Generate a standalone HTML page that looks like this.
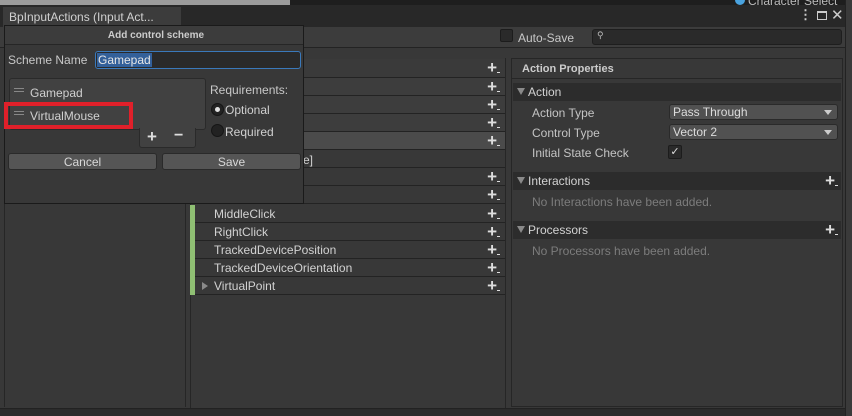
<!DOCTYPE html>
<html><head><style>
*{margin:0;padding:0;box-sizing:border-box}
body{width:852px;height:416px;overflow:hidden;background:#383838;font-family:"Liberation Sans",sans-serif;font-size:12px;color:#c4c4c4;position:relative}
.a{position:absolute}
.t{position:absolute;white-space:nowrap}
.row{position:absolute;left:190px;width:315px;height:18px;border-bottom:1px solid #232323}
.plus{position:absolute;right:8px;top:0;font-size:17px;font-weight:bold;color:#ddd;line-height:17px}
.plus:after{content:"";position:absolute;right:-3px;top:13px;width:3px;height:1px;background:#ddd}
.nm{position:absolute;left:24px;top:2px;font-size:12px;color:#d2d2d2}
.gb{position:absolute;left:0;top:0;width:5px;height:18px;background:#8fbf73}
.fold{position:absolute;left:513px;width:328px;height:18px;background:#2c2c2c}
.tri{position:absolute;left:4px;top:5px;width:0;height:0;border-left:4px solid transparent;border-right:4px solid transparent;border-top:7px solid #8a8a8a}
</style></head><body>
<div class="a" style="left:0;top:0;width:852px;height:8px;background:#1e1e1e"></div>
<div class="a" style="left:0;top:0;width:290px;height:5px;background:#9c9c9c"></div>
<div class="a" style="left:735px;top:0;width:10px;height:5px;border-radius:0 0 5px 5px;background:#4aa3df"></div>
<div class="t" style="left:748px;top:-6px;color:#bbb">Character Select</div>
<div class="a" style="left:0;top:5px;width:845px;height:22px;background:#282828"></div>
<div class="a" style="left:3px;top:7px;width:178px;height:20px;background:#3c3c3c"></div>
<div class="t" style="left:9px;top:10px;color:#d0d0d0">BpInputActions (Input Act...</div>
<div class="t" style="left:799px;top:7px;font-size:13px;color:#ccc;font-weight:bold">⋮</div>
<div class="a" style="left:817px;top:11px;width:10px;height:9px;border:1px solid #ccc;border-top:2px solid #ccc"></div>
<div class="t" style="left:831px;top:6px;font-size:15px;color:#ccc">✕</div>
<div class="a" style="left:845px;top:0;width:7px;height:416px;background:#3a3a3a;border-left:1px solid #222"></div>
<div class="a" style="left:0;top:27px;width:845px;height:21px;background:#3c3c3c;border-bottom:1px solid #232323"></div>
<div class="a" style="left:500px;top:29px;width:13px;height:13px;background:#2a2a2a;border:1px solid #1c1c1c;border-radius:2px"></div>
<div class="t" style="left:518px;top:31px;color:#c8c8c8">Auto-Save</div>
<div class="a" style="left:592px;top:29px;width:250px;height:16px;background:#2a2a2a;border:1px solid #1e1e1e;border-radius:3px"></div>
<div class="t" style="left:597px;top:30px;font-size:9px;color:#bbb">⚲</div>
<div class="a" style="left:4px;top:49px;width:182px;height:358px;border-left:1px solid #262626;border-right:1px solid #262626"></div>
<div class="a" style="left:190px;top:58px;width:316px;height:350px;border-left:1px solid #262626;border-right:1px solid #262626"></div>
<div class="a" style="left:511px;top:58px;width:332px;height:349px;border:1px solid #262626;background:#383838"></div>
<div class="a" style="left:0;top:408px;width:845px;height:8px;background:#2b2b2b;border-top:1px solid #222"></div>
<div class="row" style="top:59px;height:19px;background:#3a3a3a"><span class="plus" style="">+</span></div>
<div class="row" style="top:78px;background:#3d3d3d"><span class="plus">+</span></div>
<div class="row" style="top:96px;background:#3d3d3d"><span class="plus">+</span></div>
<div class="row" style="top:114px;background:#3d3d3d"><span class="plus">+</span></div>
<div class="row" style="top:132px;background:#4b4b4b"><span class="plus">+</span></div>
<div class="row" style="top:150px;background:#383838"><span class="nm" style="left:113px;top:3px">e]</span></div>
<div class="row" style="top:168px"><span class="gb"></span><span class="plus">+</span></div>
<div class="row" style="top:186px"><span class="gb"></span><span class="plus">+</span></div>
<div class="row" style="top:205px"><span class="gb"></span><span class="nm">MiddleClick</span><span class="plus">+</span></div>
<div class="row" style="top:223px"><span class="gb"></span><span class="nm">RightClick</span><span class="plus">+</span></div>
<div class="row" style="top:241px"><span class="gb"></span><span class="nm">TrackedDevicePosition</span><span class="plus">+</span></div>
<div class="row" style="top:259px"><span class="gb"></span><span class="nm">TrackedDeviceOrientation</span><span class="plus">+</span></div>
<div class="row" style="top:277px"><span class="gb"></span><span class="a" style="left:12px;top:5px;border-top:4px solid transparent;border-bottom:4px solid transparent;border-left:6px solid #8a8a8a"></span><span class="nm">VirtualPoint</span><span class="plus">+</span></div>
<div class="a" style="left:512px;top:59px;width:330px;height:20px;border-bottom:1px solid #262626"></div>
<div class="t" style="left:522px;top:63px;font-size:11px;font-weight:bold;color:#ccc">Action Properties</div>
<div class="fold" style="top:83px"><span class="tri"></span><span class="t" style="left:15px;top:2px;color:#d2d2d2">Action</span></div>
<div class="t" style="left:532px;top:106px">Action Type</div>
<div class="a" style="left:669px;top:104px;width:169px;height:16px;background:#515151;border-radius:3px;border:1px solid #2a2a2a"></div>
<div class="t" style="left:673px;top:105px;color:#dcdcdc">Pass Through</div>
<div class="a" style="left:824px;top:110px;border-left:4px solid transparent;border-right:4px solid transparent;border-top:5px solid #ccc"></div>
<div class="t" style="left:532px;top:126px">Control Type</div>
<div class="a" style="left:669px;top:124px;width:169px;height:16px;background:#515151;border-radius:3px;border:1px solid #2a2a2a"></div>
<div class="t" style="left:673px;top:125px;color:#dcdcdc">Vector 2</div>
<div class="a" style="left:824px;top:130px;border-left:4px solid transparent;border-right:4px solid transparent;border-top:5px solid #ccc"></div>
<div class="t" style="left:532px;top:146px">Initial State Check</div>
<div class="a" style="left:668px;top:145px;width:14px;height:14px;background:#2a2a2a;border:1px solid #1c1c1c;border-radius:2px;color:#ddd;font-size:11px;line-height:12px;text-align:center">✓</div>
<div class="fold" style="top:172px"><span class="tri"></span><span class="t" style="left:15px;top:2px;color:#d2d2d2">Interactions</span><span class="plus" style="right:6px">+</span></div>
<div class="t" style="left:532px;top:195px;color:#7c7c7c">No Interactions have been added.</div>
<div class="fold" style="top:221px"><span class="tri"></span><span class="t" style="left:15px;top:2px;color:#d2d2d2">Processors</span><span class="plus" style="right:6px">+</span></div>
<div class="t" style="left:532px;top:244px;color:#7c7c7c">No Processors have been added.</div>
<div class="a" style="left:4px;top:25px;width:300px;height:179px;background:#383838;border:1px solid #1a1a1a"></div>
<div class="a" style="left:5px;top:26px;width:298px;height:19px;background:#3c3c3c;border-bottom:1px solid #262626"></div>
<div class="t" style="left:0;top:30px;width:312px;text-align:center;font-size:10px;font-weight:bold;color:#ccc">Add control scheme</div>
<div class="t" style="left:8px;top:53px;color:#c8c8c8">Scheme Name</div>
<div class="a" style="left:95px;top:51px;width:206px;height:18px;background:#2a2a2a;border:1px solid #3a79bb;border-radius:3px"></div>
<div class="t" style="left:97px;top:53px;background:#33609a;color:#e6e6e6;padding:0 1px">Gamepad</div>
<div class="a" style="left:9px;top:78px;width:197px;height:52px;background:#414141;border:1px solid #2a2a2a;border-radius:3px"></div>
<div class="a" style="left:139px;top:128px;width:57px;height:20px;background:#414141;border:1px solid #2a2a2a;border-top:none;border-radius:0 0 3px 3px"></div>
<div class="t" style="left:147px;top:127px;font-size:17px;font-weight:bold;color:#ddd">+</div>
<div class="t" style="left:174px;top:127px;font-size:16px;font-weight:bold;color:#ddd">−</div>
<div class="a" style="left:14px;top:88px;width:10px;height:1px;background:#888;box-shadow:0 3px 0 #888"></div>
<div class="t" style="left:30px;top:86px;color:#d0d0d0">Gamepad</div>
<div class="a" style="left:4px;top:102px;width:129px;height:27px;border:4px solid #e0202a"></div>
<div class="a" style="left:14px;top:111px;width:10px;height:1px;background:#888;box-shadow:0 3px 0 #888"></div>
<div class="t" style="left:30px;top:109px;color:#d0d0d0">VirtualMouse</div>
<div class="t" style="left:210px;top:83px;color:#c8c8c8">Requirements:</div>
<div class="a" style="left:211px;top:103px;width:13px;height:13px;border-radius:50%;background:#222;border:1px solid #151515"></div>
<div class="a" style="left:215px;top:107px;width:5px;height:5px;border-radius:50%;background:#e0e0e0"></div>
<div class="t" style="left:225px;top:103px;color:#d0d0d0">Optional</div>
<div class="a" style="left:211px;top:124px;width:13px;height:13px;border-radius:50%;background:#222;border:1px solid #151515"></div>
<div class="t" style="left:225px;top:125px;color:#d0d0d0">Required</div>
<div class="a" style="left:8px;top:153px;width:149px;height:17px;background:#555;border:1px solid #2a2a2a;border-radius:3px"></div>
<div class="t" style="left:8px;top:155px;width:149px;text-align:center;color:#d8d8d8">Cancel</div>
<div class="a" style="left:162px;top:153px;width:139px;height:17px;background:#555;border:1px solid #2a2a2a;border-radius:3px"></div>
<div class="t" style="left:162px;top:155px;width:139px;text-align:center;color:#d8d8d8">Save</div>
</body></html>
